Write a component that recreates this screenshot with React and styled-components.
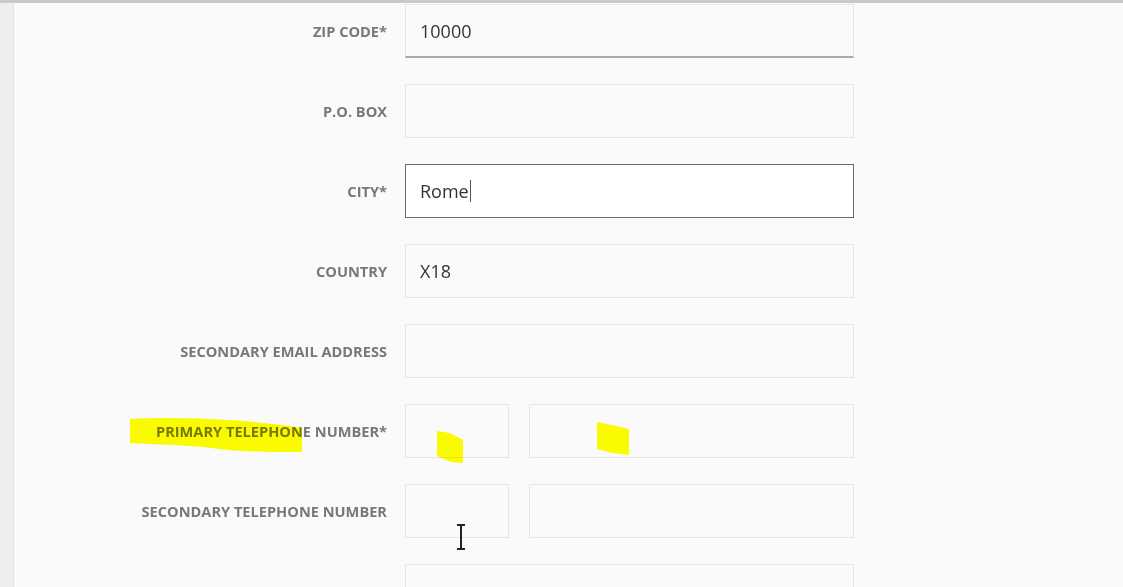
import React from "react";
import styled, { createGlobalStyle } from "styled-components";

const GlobalStyle = createGlobalStyle`
  html, body {
    margin: 0;
    padding: 0;
    height: 100%;
    overflow: hidden;
    background: #fafafa;
    font-family: "Open Sans", "Liberation Sans", sans-serif;
  }
  #root {
    height: 100%;
  }
`;

const Page = styled.div`
  position: relative;
  display: flex;
  height: 100%;
  border-top: 3px solid #c9c9c9;
  box-shadow: inset 0 1px 2px rgba(0, 0, 0, 0.08);
`;

const SideStrip = styled.div`
  width: 13px;
  flex-shrink: 0;
  background: #eeeeee;
  border-right: 1px solid #e2e2e2;
`;

const Main = styled.div`
  flex: 1;
  background: #fafafa;
  padding-top: 1px;
`;

const Form = styled.div`
  display: grid;
  grid-template-columns: 373px 449px;
  column-gap: 18px;
  row-gap: 26px;
`;

const Label = styled.label`
  display: flex;
  align-items: center;
  justify-content: flex-end;
  height: 54px;
  font-size: 14.6px;
  font-weight: 700;
  color: #787878;
  text-transform: uppercase;
  white-space: nowrap;
`;

const FieldGroup = styled.div`
  display: flex;
  gap: 20px;
`;

const Input = styled.div`
  box-sizing: border-box;
  display: flex;
  align-items: center;
  height: 54px;
  width: ${(p) => p.width || "100%"};
  flex-shrink: 0;
  padding-left: 14px;
  font-size: 18px;
  color: #333;
  background: ${(p) => (p.focused ? "#ffffff" : "#fafafa")};
  border: 1px solid ${(p) => (p.focused ? "#6b6b6b" : "#e6e6e6")};
  border-bottom: ${(p) =>
    p.focused
      ? "1px solid #6b6b6b"
      : p.touched
      ? "2px solid #a9a9a9"
      : "1px solid #e6e6e6"};
`;

const Caret = styled.span`
  display: inline-block;
  width: 1px;
  height: 22px;
  margin-left: 1px;
  background: #555;
`;

const Overlay = styled.svg`
  position: absolute;
  left: 0;
  top: -3px;
  width: 1123px;
  height: 587px;
  pointer-events: none;
  mix-blend-mode: multiply;
`;

const Cursor = styled.svg`
  position: absolute;
  left: 455px;
  top: 519px;
  width: 12px;
  height: 30px;
  pointer-events: none;
`;

const rows = [
  { label: "Zip code*", value: "10000", touched: true },
  { label: "P.O. Box" },
  { label: "City*", value: "Rome", focused: true },
  { label: "Country", value: "X18" },
  { label: "Secondary email address" },
  { label: "Primary telephone number*", phone: true },
  { label: "Secondary telephone number", phone: true },
  { label: "" },
];

export default function App() {
  return (
    <>
      <GlobalStyle />
      <Page>
        <SideStrip />
        <Main>
          <Form>
            {rows.map((row, i) => (
              <React.Fragment key={i}>
                <Label>{row.label}</Label>
                {row.phone ? (
                  <FieldGroup>
                    <Input width="104px" />
                    <Input width="325px" />
                  </FieldGroup>
                ) : (
                  <Input focused={row.focused} touched={row.touched}>
                    {row.value}
                    {row.focused && <Caret />}
                  </Input>
                )}
              </React.Fragment>
            ))}
          </Form>
        </Main>
        <Overlay viewBox="0 0 1123 587">
          <path
            fill="#ffff00"
            d="M130 419 C160 417 200 418 230 420 C260 422 285 425 302 428 L302 452 C280 452 250 452 228 450 C200 446 175 445 150 444 L130 443 Z"
          />
          <path
            fill="#ffff00"
            d="M437 431 L450 433 L463 440 L463 463 L451 462 L437 456 Z"
          />
          <path
            fill="#ffff00"
            d="M597 422 L612 425 L629 429 L629 455 L612 453 L597 449 Z"
          />
        </Overlay>
        <Cursor viewBox="0 0 12 30">
          <path
            d="M2 3 H10 M6 3 V27 M2 27 H10"
            stroke="#222"
            strokeWidth="2"
            fill="none"
          />
        </Cursor>
      </Page>
    </>
  );
}
